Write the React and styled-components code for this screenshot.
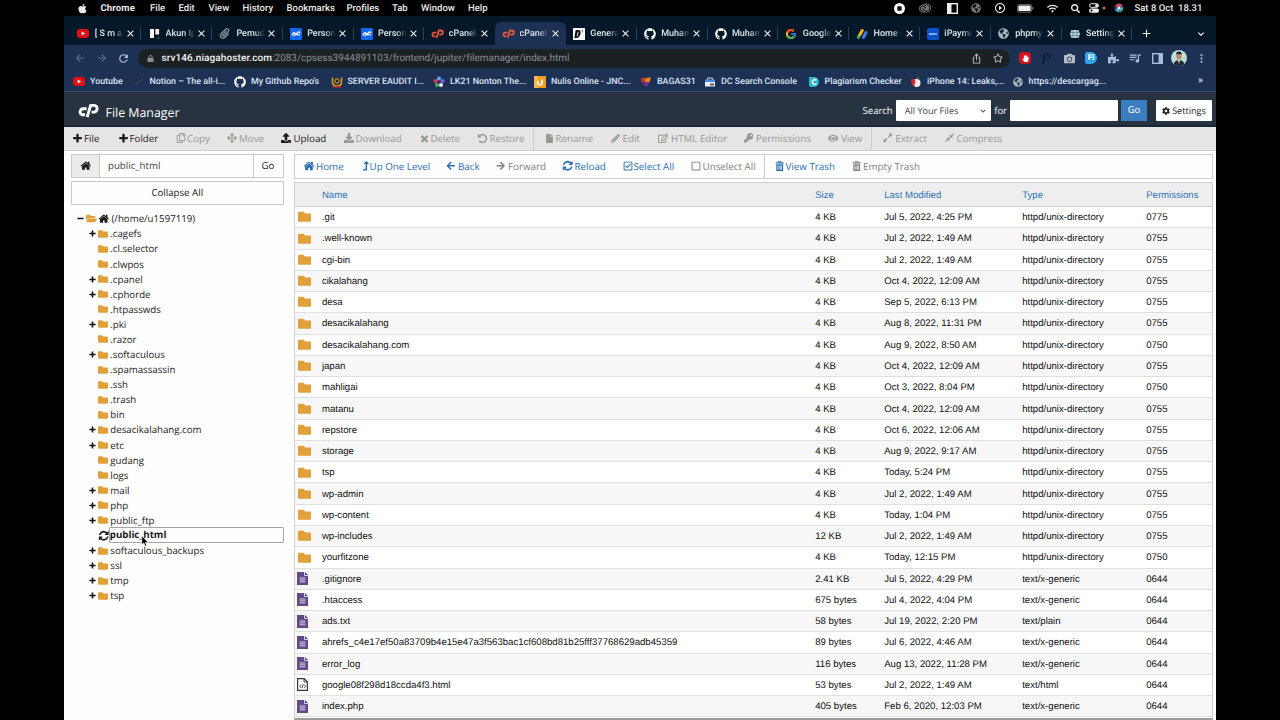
import React from 'react';
import styled, { createGlobalStyle } from 'styled-components';
import {
  FaApple, FaWifi, FaSearch, FaGithub, FaGlobeAmericas, FaPaperclip, FaLock, FaHandPaper,
  FaCamera, FaPuzzlePiece, FaFolder, FaFolderOpen, FaRegCopy, FaArrowsAlt, FaUpload, FaDownload,
  FaFile, FaPencilAlt, FaRegEdit, FaKey, FaEye, FaExpandAlt, FaCompressAlt, FaLevelUpAlt,
  FaArrowLeft, FaArrowRight, FaRegCheckSquare, FaRegSquare, FaCog, FaRegStar,
} from 'react-icons/fa';
import { ImBin } from 'react-icons/im';
import { FcGoogle } from 'react-icons/fc';
import { SiAdobecreativecloud } from 'react-icons/si';
import {
  MdArrowBack, MdArrowForward, MdRefresh, MdIosShare, MdQueueMusic, MdMoreVert, MdClose, MdAdd,
  MdKeyboardArrowDown, MdCheck, MdPlayCircleOutline,
} from 'react-icons/md';

const GlobalStyle = createGlobalStyle`
  * { box-sizing: border-box; }
  body {
    margin: 0;
    background: #000;
    overflow: hidden;
    text-rendering: geometricPrecision;
  }
  svg { display: block; flex: none; }
`;

const ui = `Roboto, "Liberation Sans", sans-serif`;
const open = `"Open Sans", "Noto Sans", sans-serif`;

const Screen = styled.div`
  width: 1152px;
  height: 720px;
  margin: 0 auto;
  display: flex;
  flex-direction: column;
  background: #fefefe;
  overflow: hidden;
`;

/* ---------- menu bar ---------- */

const MenuBar = styled.div`
  height: 16px;
  flex: none;
  display: flex;
  align-items: center;
  background: #000;
  color: #e8e8e8;
  font: 500 9.5px/15px ${ui};
  padding-left: 12.5px;
`;

const MenuItem = styled.div`
  width: ${({ w }) => w}px;
  flex: none;
  padding-top: 1px;
  white-space: nowrap;
  font-weight: ${({ strong }) => (strong ? 700 : 500)};
  letter-spacing: ${({ strong }) => (strong ? 0.15 : 0)}px;
`;

const StatusIcon = styled.div`
  width: ${({ w = 14 }) => w}px;
  margin-left: ${({ ml }) => ml}px;
  flex: none;
  display: flex;
  justify-content: center;
  color: ${({ dim }) => (dim ? '#777' : '#eee')};
`;

const Clock = styled.div`
  margin-left: 9px;
  padding-top: 1px;
  white-space: pre;
`;

/* ---------- browser ---------- */

const TabStrip = styled.div`
  height: 29px;
  flex: none;
  display: flex;
  align-items: flex-end;
  padding-left: 6.4px;
  background: #051829;
  color: #dfe4ea;
`;

const Tab = styled.div`
  width: 70.8px;
  height: 23px;
  flex: none;
  display: flex;
  align-items: center;
  padding-left: 6px;
  border-radius: 6px 6px 0 0;
  background: ${({ active }) => (active ? '#1c3154' : 'transparent')};
`;

const TabIcon = styled.div`
  width: 14px;
  display: flex;
  justify-content: center;
`;

const TabTitle = styled.div`
  width: 30px;
  margin-left: 4.4px;
  flex: none;
  white-space: pre;
  font: 500 9px/14px ${ui};
  mask-image: linear-gradient(to right, #000 60%, transparent 96%);
`;

const TabClose = styled.div`
  width: 11px;
  color: #fff;
`;

const TabDivider = styled.div`
  width: 1px;
  height: 13px;
  margin-left: auto;
  background: ${({ hidden }) => (hidden ? 'transparent' : '#2d3e50')};
`;

const StripButton = styled.div`
  width: 16px;
  height: 23px;
  margin-left: ${({ ml }) => ml}px;
  display: flex;
  align-items: center;
  justify-content: center;
  color: #fff;
`;

const AddressRow = styled.div`
  height: 26px;
  flex: none;
  display: flex;
  align-items: center;
  padding-left: 4.5px;
  background: #1c3154;
`;

const NavButton = styled.div`
  width: 22px;
  display: flex;
  justify-content: center;
  color: ${({ bright }) => (bright ? '#b9cbe9' : '#5c7090')};
`;

const Omnibox = styled.div`
  width: 872px;
  height: 19px;
  margin: 0 4px 0 3.5px;
  display: flex;
  align-items: center;
  padding: 0 1px 0 9px;
  border-radius: 10px;
  background: #1b2022;
  color: #8a8f93;
`;

const Url = styled.div`
  flex: 1;
  margin-left: 7.5px;
  font: 400 10px/19px ${ui};
  letter-spacing: -0.02px;
  white-space: nowrap;

  b {
    font-weight: 500;
    color: #f2f4f5;
    letter-spacing: 0.1px;
  }
`;

const OmniIcon = styled.div`
  width: 22px;
  display: flex;
  justify-content: center;
  color: #c3c7ca;
`;

const Extension = styled.div`
  width: 22px;
  display: flex;
  justify-content: center;
  color: #a9bddf;
`;

const HandBadge = styled.div`
  width: 12px;
  height: 12px;
  display: grid;
  place-items: center;
  border-radius: 4px;
  background: #d3121b;
  color: #fff;
`;

const FormulaMark = styled.div`
  font: italic 700 11px/12px "Liberation Serif", serif;
  color: #0a1422;
`;

const FiBadge = styled.div`
  width: 12px;
  height: 12px;
  border-radius: 2px 6px 6px 2px;
  background: #2ba3e6;
  color: #fff;
  font: 700 8px/12px ${ui};
  text-align: center;
`;

const BookmarkRow = styled.div`
  height: 21px;
  flex: none;
  display: flex;
  align-items: center;
  padding: 1px 0 0 8px;
  background: #1c3154;
  color: #dde6f5;
  border-bottom: 1px solid #34466a;
`;

const Bookmark = styled.div`
  width: ${({ w }) => w}px;
  flex: none;
  display: flex;
  align-items: center;
  gap: 4px;
  font: 500 8.9px/14px ${ui};
  white-space: nowrap;
`;

const BookmarkIcon = styled.div`
  width: 14px;
  flex: none;
  display: flex;
  justify-content: center;
`;

const MoreBookmarks = styled.div`
  font: 500 10px/14px ${ui};
  padding-bottom: 2px;
`;

/* ---------- cPanel header ---------- */

const Header = styled.div`
  height: 35px;
  flex: none;
  display: flex;
  align-items: center;
  padding: 5px 4px 1px 14px;
  background: #273340;
  border-bottom: 2px solid #1c2733;
  color: #fff;
  font: 400 9.5px/20px ${open};
`;

const HeaderTitle = styled.div`
  flex: 1;
  margin: 4px 0 0 6.5px;
  font-size: 12.4px;
`;

const SearchSelect = styled.div`
  width: 95.5px;
  height: 21px;
  margin: 0 3px;
  padding: 0 3px 0 9px;
  display: flex;
  align-items: center;
  justify-content: space-between;
  border-radius: 1px;
  background: #fff;
  color: #444;
  font-size: 9.1px;
`;

const SearchInput = styled.div`
  width: 107.5px;
  height: 21px;
  margin: 0 3.5px 0 3px;
  border-radius: 1px;
  background: #fff;
`;

const GoButton = styled.div`
  width: 26px;
  height: 21px;
  background: #3a7ebf;
  text-align: center;
`;

const SettingsButton = styled.div`
  width: 56px;
  height: 21px;
  margin-left: 9px;
  display: flex;
  align-items: center;
  justify-content: center;
  gap: 2px;
  border-radius: 1px;
  background: #fff;
  color: #222;
  font-size: 9.1px;
`;

const Toolbar = styled.div`
  height: 24px;
  flex: none;
  display: flex;
  align-items: center;
  padding-left: 8px;
  background: #e5e5e5;
  border-bottom: 1px solid #cfcfcf;
  font: 400 9.75px/21px ${open};
`;

const toolColors = { dark: '#1c1c1c', off: '#979797', link: '#2a6fb0', muted: '#808080' };

const Tool = styled.div`
  width: ${({ w }) => w}px;
  height: 100%;
  flex: none;
  display: flex;
  align-items: center;
  padding-bottom: 1px;
  color: ${({ tone }) => toolColors[tone]};
  white-space: nowrap;
`;

const ToolIcon = styled.div`
  width: ${({ w = 12 }) => w}px;
  flex: none;
`;

const ToolDivider = styled.div`
  width: 1px;
  height: 100%;
  margin-right: ${({ mr }) => mr}px;
  background: #cdcdcd;
`;

/* ---------- body ---------- */

const Body = styled.div`
  flex: 1;
  min-height: 0;
  display: flex;
  gap: 10px;
  padding: 3px 3.5px 0 7px;
`;

const Sidebar = styled.div`
  width: 212.5px;
  flex: none;
  font: 400 9.7px/15px ${open};
  color: #1a1a1a;
`;

const PathGroup = styled.div`
  height: 24px;
  display: flex;
  border: 1px solid #c9c9c9;
  line-height: 22px;
`;

const PathHome = styled.div`
  width: 28px;
  display: grid;
  place-items: center;
  background: #ebebeb;
  border-right: 1px solid #c9c9c9;
`;

const PathInput = styled.div`
  flex: 1;
  padding-left: 8px;
  color: #444;
`;

const PathGo = styled.div`
  width: 30px;
  text-align: center;
  border-left: 1px solid #c9c9c9;
`;

const CollapseButton = styled.div`
  height: 24px;
  margin: 3px 0 6.3px;
  border: 1px solid #c9c9c9;
  text-align: center;
  line-height: 21px;
`;

const TreeRow = styled.div`
  height: 15.09px;
  display: flex;
  align-items: center;
  padding-left: ${({ root }) => (root ? 6 : 18)}px;
`;

const Toggle = styled.div`
  width: 9px;
  flex: none;
`;

const TreeIcon = styled.div`
  width: ${({ w = 12.3 }) => w}px;
  flex: none;
`;

const TreeLabel = styled.div`
  white-space: nowrap;
`;

const SelectedLabel = styled.div`
  position: relative;
  flex: 1;
  height: 16px;
  margin-left: -1.5px;
  border: 1px solid #a5a5a5;
  border-radius: 1px;
  font-weight: 700;
  line-height: 14px;
`;

const Pointer = styled.svg`
  position: absolute;
  left: 31px;
  top: 7px;
`;

const Main = styled.div`
  flex: 1;
  min-width: 0;
  display: flex;
  flex-direction: column;
`;

const ActionBar = styled.div`
  height: 25px;
  flex: none;
  display: flex;
  align-items: center;
  margin-bottom: 3px;
  padding-left: 8.5px;
  border: 1px solid #cfcfcf;
  font: 400 9.8px/23px ${open};
`;

const Table = styled.div`
  flex: 1;
  min-height: 0;
  border: 1px solid #cfcfcf;
  border-bottom: 2px solid #9b9b9b;
  font: 400 9.6px/18px "Liberation Sans", Arial, sans-serif;
  color: #111;
  overflow: hidden;
`;

const TableRow = styled.div`
  height: ${({ head }) => (head ? 24 : 21.27)}px;
  display: grid;
  grid-template-columns: 27.4px 493.3px 69px 138px 124px 1fr;
  align-items: center;
  background: ${({ head, odd }) => (head ? '#eeeeee' : odd ? '#f7f7f7' : '#fff')};
  border-bottom: 1px solid ${({ head }) => (head ? '#cfcfcf' : '#dfdfdf')};
  color: ${({ head }) => (head ? '#2f74b5' : 'inherit')};
  white-space: nowrap;
`;

const Cell = styled.div`
  padding-top: 2px;
`;

const RowIcon = styled.div`
  padding-left: ${({ folder }) => (folder ? 3 : 2.5)}px;
`;

/* ---------- drawings ---------- */

const solid = {
  plus: 'M1600 736v192q0 40-28 68t-68 28h-416v416q0 40-28 68t-68 28h-192q-40 0-68-28t-28-68v-416h-416q-40 0-68-28t-28-68v-192q0-40 28-68t68-28h416v-416q0-40 28-68t68-28h192q40 0 68 28t28 68v416h416q40 0 68 28t28 68z',
  times: 'M1490 1322q0 40-28 68l-136 136q-28 28-68 28t-68-28l-294-294-294 294q-28 28-68 28t-68-28l-136-136q-28-28-28-68t28-68l294-294-294-294q-28-28-28-68t28-68l136-136q28-28 68-28t68 28l294 294 294-294q28-28 68-28t68 28l136 136q28 28 28 68t-28 68l-294 294 294 294q28 28 28 68z',
  home: 'M1472 992v480q0 26-19 45t-45 19h-384v-384h-256v384h-384q-26 0-45-19t-19-45v-480q0-1 .5-3t.5-3l575-474 575 474q1 2 1 6zm223-69l-62 74q-8 9-21 11h-3q-13 0-21-7l-692-577-692 577q-12 8-24 7-13-2-21-11l-62-74q-8-10-7-23.5t11-21.5l719-599q32-26 76-26t76 26l244 204v-195q0-14 9-23t23-9h192q14 0 23 9t9 23v408l219 182q10 8 11 21.5t-7 23.5z',
  refresh: 'M1639 1056q0 5-1 7-64 268-268 434.5t-478 166.5q-146 0-282.5-55t-243.5-157l-129 129q-19 19-45 19t-45-19-19-45v-448q0-26 19-45t45-19h448q26 0 45 19t19 45-19 45l-137 137q71 66 161 102t187 36q134 0 250-65t186-179q11-17 53-117 8-23 30-23h192q13 0 22.5 9.5t9.5 22.5zm25-800v448q0 26-19 45t-45 19h-448q-26 0-45-19t-19-45 19-45l138-138q-148-137-349-137-134 0-250 65t-186 179q-11 17-53 117-8 23-30 23h-199q-13 0-22.5-9.5t-9.5-22.5v-7q65-268 270-434.5t480-166.5q146 0 284 55.5t245 156.5l130-129q19-19 45-19t45 19 19 45z',
  undo: 'M1664 896q0 156-61 298t-164 245-245 164-298 61q-172 0-327-72.5t-264-204.5q-7-10-6.5-22.5t8.5-20.5l137-138q10-9 25-9 16 2 23 12 73 95 179 147t225 52q104 0 198.5-40.5t163.5-109.5 109.5-163.5 40.5-198.5-40.5-198.5-109.5-163.5-163.5-109.5-198.5-40.5q-98 0-188 35.5t-160 101.5l137 138q31 30 14 69-17 40-59 40h-448q-26 0-45-19t-19-45v-448q0-42 40-59 39-17 69 14l130 129q107-101 244.5-156.5t284.5-55.5q156 0 298 61t245 164 164 245 61 298z',
};

const Solid = ({ name, size }) => (
  <svg width={size} height={size} viewBox="0 0 1792 1792" fill="currentColor"><path d={solid[name]} /></svg>
);

const CpLogo = ({ width = 21, color = '#fff' }) => (
  <svg width={width} height={width * 0.7} viewBox="0 0 21 14.7" fill="none" stroke={color} strokeWidth="2.9" strokeLinejoin="round">
    <path d="M8.6 5.7H5.1a3.1 3.1 0 0 0-.6 6.100h2.600" />
    <path d="M9.200 14.200 12.600 2.400h3.200a3.300 3.300 0 0 1 0 6.700h-2.200" />
  </svg>
);

const YoutubeIcon = () => (
  <svg width="12" height="9" viewBox="0 0 12 9"><rect width="12" height="9" rx="2.4" fill="#e00d14" /><path d="M4.7 2.5v4L8.1 4.5z" fill="#fff" /></svg>
);

const BoardIcon = () => (
  <svg width="11" height="11" viewBox="0 0 11 11"><rect x="1" y="1" width="4" height="9" fill="#fff" /><rect x="6.3" y="1" width="3.8" height="5.5" fill="#f4ecd4" /><circle cx="9.4" cy="10" r="0.8" fill="#3aa655" /></svg>
);

const WaveIcon = () => (
  <svg width="12" height="12" viewBox="0 0 12 12"><rect width="12" height="12" rx="1" fill="#1566e8" /><path d="M2 7.6C3 4.6 4.4 4 5 5.6s1.2 1.6 2-.4 2.6-1.6 3 .2M3.6 7.8c1.2-.2 1.8-2 2.8-2.2s1 2 3.2 1" fill="none" stroke="#fff" strokeWidth="1.3" /></svg>
);

const NotesIcon = () => (
  <svg width="12" height="12" viewBox="0 0 12 12"><rect width="12" height="12" fill="#fff" /><path d="M2.6 2h3.600q2 1 1.200 4.200-.8 3-3.400 3.800H1.400z" fill="#111" /><path d="M4.800 3.800h.9L4.600 8.200h-.9z" fill="#fff" /><path d="M8.8 2h1.2v2.500H8.800z" fill="#888" /></svg>
);

const AdsIcon = () => (
  <svg width="12" height="12" viewBox="0 0 12 12" strokeLinecap="round" strokeWidth="3"><path d="M6.3 2.5 2.5 9" stroke="#f3b90c" /><path d="M10 4.5 7.5 9.3" stroke="#3f7fe8" /><circle cx="2.5" cy="9" r="1.7" fill="#35a455" /></svg>
);

const PaymentIcon = () => (
  <svg width="12" height="12" viewBox="0 0 12 12"><rect width="12" height="12" rx="2" fill="#0a50c8" /><path d="M2 6h8" stroke="#d6e5ff" strokeWidth="1.5" strokeDasharray="1.4 .4" /></svg>
);

const GridGlobeIcon = () => (
  <svg width="12" height="12" viewBox="0 0 12 12"><path d="M2.500 2h7l1.500 4-1.500 4h-7L1 6z" fill="#b5d5df" /><path d="M1 4.5h10M1 7.5h10M4 2v8M8 2v8" stroke="#37596b" strokeWidth=".5" /></svg>
);

const EmblemIcon = () => (
  <svg width="12" height="12" viewBox="0 0 12 12" fill="none"><path d="M1.5 1.5v5q0 3 4.5 3.5 4.5-.5 4.5-3.5v-5" stroke="#d9a01d" strokeWidth="1.5" /><circle cx="6" cy="5" r="2.2" fill="#2b241b" stroke="#f0b423" /><path d="M2 10.7h8" stroke="#d22c26" strokeWidth="1.6" /></svg>
);

const PetalsIcon = () => (
  <svg width="12" height="12" viewBox="0 0 12 12"><circle cx="6" cy="2.6" r="2" fill="#47b3ea" /><circle cx="9.5" cy="5" r="2" fill="#8c5de0" /><circle cx="8" cy="9" r="2" fill="#eee" /><circle cx="4" cy="9" r="2" fill="#46ae4f" /><circle cx="2.6" cy="5" r="2" fill="#e03c5c" /></svg>
);

const OrangeIcon = () => (
  <svg width="12" height="12" viewBox="0 0 12 12"><rect width="12" height="12" fill="#ef9d22" /><rect width="4" height="12" fill="#f5b74d" /><path d="M4 5v2q0 2 2 2t2-2V3.5" stroke="#fff" strokeWidth="1.6" fill="none" /></svg>
);

const FlagsIcon = () => (
  <svg width="12" height="12" viewBox="0 0 12 12"><path d="M1 2.5 5 1.5v4L1 6z" fill="#c63b2b" /><path d="M5.5 2 11 1.5 9.5 6 5 6.5z" fill="#ef8a1d" /><path d="M1.5 6.5 9.5 6 7.5 10.5 4 9z" fill="#7b2a86" /></svg>
);

const ConsoleIcon = () => (
  <svg width="12" height="12" viewBox="0 0 12 12"><path d="M3.5 4V2h5v2" fill="none" stroke="#cdd3da" /><rect x="1" y="3.5" width="10" height="3" fill="#4c87e0" /><rect x="1" y="6" width="10" height="4.5" fill="#eceff2" /><path d="M6 7.5h4v2H6z" fill="#596575" /></svg>
);

const TealIcon = () => (
  <svg width="12" height="12" viewBox="0 0 12 12"><path d="M1 1h5a5 5 0 0 1 0 10H3a2 2 0 0 1-2-2z" fill="#29b7cb" /><path d="M8.5 4.3a2.4 2.4 0 1 0 0 3.4" fill="none" stroke="#fff" strokeWidth="1.3" /></svg>
);

const FruitIcon = () => (
  <svg width="12" height="12" viewBox="0 0 12 12"><circle cx="6.5" cy="7" r="4" fill="#f4f0ee" /><path d="M1 4q2-2 4-.5Q6 6 4.5 8L5 11Q1 9 1 4z" fill="#d8232a" /><path d="M6.5 3Q7 .8 9.5 1 9 3 6.5 3z" fill="#4c9c3e" /></svg>
);

const AvatarIcon = () => (
  <svg width="16" height="16" viewBox="0 0 16 16"><clipPath id="face"><circle cx="8" cy="8" r="8" /></clipPath><g clipPath="url(#face)"><rect width="16" height="16" fill="#b9e0d2" /><path d="M2.5 16q0-6 5.5-6t5.5 6z" fill="#222830" /><ellipse cx="8" cy="6" rx="2.6" ry="3.5" fill="#b98a6e" /><path d="M5.2 5.2Q5 1.6 8 1.6t2.8 3.6L10 4H6z" fill="#17191d" /><path d="M7 10h2l-1 4z" fill="#eee" /></g></svg>
);

const PanelIcon = ({ left }) => (
  <svg width="11" height="11" viewBox="0 0 11 11"><rect x=".7" y=".7" width="9.6" height="9.6" fill="none" stroke="currentColor" strokeWidth="1.4" /><rect x={left ? 1 : 6.5} y="1" width="3.5" height="9" fill="currentColor" /></svg>
);

const RecordIcon = () => (
  <svg width="11" height="11" viewBox="0 0 11 11"><circle cx="5.5" cy="5.5" r="5.5" fill="#fff" /><rect x="3.3" y="3.3" width="4.4" height="4.4" rx=".8" fill="#111" /></svg>
);

const BatteryIcon = () => (
  <svg width="17" height="9" viewBox="0 0 17 9"><rect x=".4" y=".4" width="14.2" height="7.7" rx="2" fill="none" stroke="#888" strokeWidth=".8" /><rect x="1.4" y="1.4" width="12.2" height="5.7" rx="1.2" fill="#eee" /><path d="M15.8 3v2.6" stroke="#888" /></svg>
);

const ControlIcon = () => (
  <svg width="10" height="10" viewBox="0 0 10 10"><rect x=".5" y=".7" width="9" height="3.6" rx="1.8" fill="none" stroke="#eee" /><circle cx="7.6" cy="2.5" r="1.5" fill="#eee" /><rect y="5.5" width="10" height="4.3" rx="2.1" fill="#eee" /><circle cx="2.5" cy="7.6" r="1.1" fill="#111" /></svg>
);

const DotIcon = () => <svg width="4" height="4" viewBox="0 0 4 4"><circle cx="2" cy="2" r="1.5" fill="#c8751b" /></svg>;

const SiriIcon = () => (
  <svg width="10" height="10" viewBox="0 0 10 10"><circle cx="5" cy="5" r="4.8" fill="#2c3150" /><path d="M1 3Q5-1 8.5 2.5L5 5z" fill="#d8456c" /><path d="M1 6q1 3.5 4.5 3L5 5z" fill="#38a4dc" /><path d="M9 4q.5 4-3 5L5 5z" fill="#39b190" /><circle cx="5" cy="5" r="1.6" fill="#eef" /></svg>
);

const TextFileIcon = () => (
  <svg width="11" height="13" viewBox="0 0 11 13"><path d="M0 0h7.2v3.8H11V13H0z" fill="#614a85" /><path d="M8 0l3 3H8z" fill="#614a85" /><path d="M2.6 6h5.8M2.6 7.9h5.8M2.6 9.8h5.8" stroke="#d9cfe8" strokeWidth="1" /></svg>
);

const CodeFileIcon = () => (
  <svg width="11" height="13" viewBox="0 0 11 13" fill="none" stroke="#33363f"><path d="M.6.6h6.6L10.4 4v8.4H.6z" strokeWidth="1.2" /><path d="M7 .6V4h3.3M4 6.5 2.7 8.2 4 9.9M7.3 6.5l1.3 1.7-1.3 1.7M6.2 6.2 5.1 10.2" strokeWidth=".9" /></svg>
);

/* ---------- data ---------- */

const menus = [['File', 28.5], ['Edit', 30], ['View', 34], ['History', 44], ['Bookmarks', 60], ['Profiles', 45.5], ['Tab', 29], ['Window', 47], ['Help', 60]];

const orange = <CpLogo width={13} color="#f0553a" />;
const tabs = [
  [<YoutubeIcon />, '[ S m a'],
  [<BoardIcon />, 'Akun Ip'],
  [<FaPaperclip size={11} color="#7f8b96" />, 'Pemud'],
  [<WaveIcon />, 'Person'],
  [<WaveIcon />, 'Person'],
  [orange, 'cPanel'],
  [orange, 'cPanel'],
  [<NotesIcon />, 'Genera'],
  [<FaGithub size={12} color="#fff" />, 'Muham'],
  [<FaGithub size={12} color="#fff" />, 'Muham'],
  [<FcGoogle size={12} />, 'Google'],
  [<AdsIcon />, 'Home -'],
  [<PaymentIcon />, 'iPaymu'],
  [<FaGlobeAmericas size={11} color="#a9b2ba" />, 'phpmy'],
  [<GridGlobeIcon />, 'Setting'],
];

const bookmarks = [
  [<YoutubeIcon />, 'Youtube', 59.5],
  [<MdCheck size={13} color="#3d4650" />, 'Notion – The all-i...', 101.5],
  [<FaGithub size={12} color="#fff" />, "My Github Repo's", 96.5],
  [<EmblemIcon />, 'SERVER EAUDIT I...', 102.5],
  [<PetalsIcon />, 'LK21 Nonton The...', 101],
  [<OrangeIcon />, 'Nulis Online - JNC...', 106],
  [<FlagsIcon />, 'BAGAS31', 64],
  [<ConsoleIcon />, 'DC Search Console', 103.5],
  [<TealIcon />, 'Plagiarism Checker', 102.5],
  [<FruitIcon />, 'iPhone 14: Leaks,...', 101.5],
  [<FaGlobeAmericas size={10} color="#a9b2ba" />, 'https://descargag...', 187.5],
];

const folders = [
  ['.cagefs', 1], ['.cl.selector', 0], ['.clwpos', 0], ['.cpanel', 1], ['.cphorde', 1], ['.htpasswds', 0],
  ['.pki', 1], ['.razor', 0], ['.softaculous', 1], ['.spamassassin', 0], ['.ssh', 0], ['.trash', 0], ['bin', 0],
  ['desacikalahang.com', 1], ['etc', 1], ['gudang', 0], ['logs', 0], ['mail', 1], ['php', 1], ['public_ftp', 1],
  ['public_html', 0], ['softaculous_backups', 1], ['ssl', 1], ['tmp', 1], ['tsp', 1],
];

const dir = 'httpd/unix-directory';
const files = [
  ['.git', '4 KB', 'Jul 5, 2022, 4:25 PM', dir, '0775'],
  ['.well-known', '4 KB', 'Jul 2, 2022, 1:49 AM', dir, '0755'],
  ['cgi-bin', '4 KB', 'Jul 2, 2022, 1:49 AM', dir, '0755'],
  ['cikalahang', '4 KB', 'Oct 4, 2022, 12:09 AM', dir, '0755'],
  ['desa', '4 KB', 'Sep 5, 2022, 6:13 PM', dir, '0755'],
  ['desacikalahang', '4 KB', 'Aug 8, 2022, 11:31 PM', dir, '0755'],
  ['desacikalahang.com', '4 KB', 'Aug 9, 2022, 8:50 AM', dir, '0750'],
  ['japan', '4 KB', 'Oct 4, 2022, 12:09 AM', dir, '0755'],
  ['mahligai', '4 KB', 'Oct 3, 2022, 8:04 PM', dir, '0750'],
  ['matanu', '4 KB', 'Oct 4, 2022, 12:09 AM', dir, '0755'],
  ['repstore', '4 KB', 'Oct 6, 2022, 12:06 AM', dir, '0755'],
  ['storage', '4 KB', 'Aug 9, 2022, 9:17 AM', dir, '0755'],
  ['tsp', '4 KB', 'Today, 5:24 PM', dir, '0755'],
  ['wp-admin', '4 KB', 'Jul 2, 2022, 1:49 AM', dir, '0755'],
  ['wp-content', '4 KB', 'Today, 1:04 PM', dir, '0755'],
  ['wp-includes', '12 KB', 'Jul 2, 2022, 1:49 AM', dir, '0755'],
  ['yourfitzone', '4 KB', 'Today, 12:15 PM', dir, '0750'],
  ['.gitignore', '2.41 KB', 'Jul 5, 2022, 4:29 PM', 'text/x-generic', '0644'],
  ['.htaccess', '675 bytes', 'Jul 4, 2022, 4:04 PM', 'text/x-generic', '0644'],
  ['ads.txt', '58 bytes', 'Jul 19, 2022, 2:20 PM', 'text/plain', '0644'],
  ['ahrefs_c4e17ef50a83709b4e15e47a3f563bac1cf608bd81b25fff37768629adb45359', '89 bytes', 'Jul 6, 2022, 4:46 AM', 'text/x-generic', '0644'],
  ['error_log', '116 bytes', 'Aug 13, 2022, 11:28 PM', 'text/x-generic', '0644'],
  ['google08f298d18ccda4f3.html', '53 bytes', 'Jul 2, 2022, 1:49 AM', 'text/html', '0644'],
  ['index.php', '405 bytes', 'Feb 6, 2020, 12:03 PM', 'text/x-generic', '0644'],
];

// [icon, label, distance to the next item, tone, icon column width]
const tools = [
  [<Solid name="plus" size={11} />, 'File', 45.5, 'dark'],
  [<Solid name="plus" size={11} />, 'Folder', 58, 'dark'],
  [<FaRegCopy size={10} />, 'Copy', 51.5, 'off', 11.5],
  [<FaArrowsAlt size={10} />, 'Move', 54, 'off', 12],
  [<FaUpload size={10} />, 'Upload', 62.5, 'dark', 12.5],
  [<FaDownload size={10} />, 'Download', 75, 'off', 12],
  [<Solid name="times" size={11} />, 'Delete', 58.5, 'off', 12],
  [<Solid name="undo" size={11} />, 'Restore', 55.5, 'off', 12.5],
  null,
  [<FaFile size={9} />, 'Rename', 65.5, 'off', 10.5],
  [<FaPencilAlt size={9} />, 'Edit', 47, 'off', 12],
  [<FaRegEdit size={10.5} />, 'HTML Editor', 86, 'off', 13.5],
  [<FaKey size={9.5} />, 'Permissions', 84.5, 'off', 12.5],
  [<FaEye size={10.5} />, 'View', 43, 'off', 13],
  null,
  [<FaExpandAlt size={9.5} />, 'Extract', 61.5, 'off', 12.5],
  [<FaCompressAlt size={9.5} />, 'Compress', 80, 'off', 12],
];

const actions = [
  [<Solid name="home" size={12} />, 'Home', 58, 'link', 13],
  [<FaLevelUpAlt size={9.5} />, 'Up One Level', 85, 'link', 8.5],
  [<FaArrowLeft size={9.5} />, 'Back', 50, 'link', 12],
  [<FaArrowRight size={9.5} />, 'Forward', 66, 'muted', 12],
  [<Solid name="refresh" size={11.5} />, 'Reload', 60.5, 'link', 12.5],
  [<FaRegCheckSquare size={10} />, 'Select All', 68.5, 'link', 11],
  [<FaRegSquare size={10} />, 'Unselect All', 72.5, 'muted', 11.5],
  null,
  [<ImBin size={10} />, 'View Trash', 77.5, 'link', 11],
  [<ImBin size={10} />, 'Empty Trash', 80, 'muted', 11],
];

const ToolList = ({ items, gaps }) => {
  let seen = 0;
  return items.map((item, i) => {
    if (!item) return <ToolDivider key={i} mr={gaps[seen++]} />;
    const [icon, label, w, tone, iconWidth] = item;
    return (
      <Tool key={i} w={w} tone={tone}>
        <ToolIcon w={iconWidth}>{icon}</ToolIcon>
        {label}
      </Tool>
    );
  });
};

const fileIcon = (type) => {
  if (type === dir) return <FaFolder size={13.5} color="#e0a03a" />;
  return type === 'text/html' ? <CodeFileIcon /> : <TextFileIcon />;
};

const MacMenu = () => (
  <MenuBar>
    <MenuItem w={24}><FaApple size={11} /></MenuItem>
    <MenuItem w={49.5} strong>Chrome</MenuItem>
    {menus.map(([label, w]) => <MenuItem key={label} w={w}>{label}</MenuItem>)}
    <StatusIcon ml={364}><RecordIcon /></StatusIcon>
    <StatusIcon ml={12} dim><SiAdobecreativecloud size={12} /></StatusIcon>
    <StatusIcon ml={13.5}><PanelIcon left /></StatusIcon>
    <StatusIcon ml={9.5} dim><FaGlobeAmericas size={10} /></StatusIcon>
    <StatusIcon ml={10}><MdPlayCircleOutline size={12} /></StatusIcon>
    <StatusIcon ml={9} w={18}><BatteryIcon /></StatusIcon>
    <StatusIcon ml={11}><FaWifi size={11} /></StatusIcon>
    <StatusIcon ml={9}><FaSearch size={9} /></StatusIcon>
    <StatusIcon ml={5}><ControlIcon /></StatusIcon>
    <StatusIcon ml={1} w={4}><DotIcon /></StatusIcon>
    <StatusIcon ml={5.5}><SiriIcon /></StatusIcon>
    <Clock>Sat 8 Oct  18.31</Clock>
  </MenuBar>
);

const Browser = () => (
  <>
    <TabStrip>
      {tabs.map(([icon, title], i) => (
        <Tab key={i} active={i === 6 ? 1 : undefined}>
          <TabIcon>{icon}</TabIcon>
          <TabTitle>{title}</TabTitle>
          <TabClose><MdClose size={11} /></TabClose>
          <TabDivider hidden={i === 5 || i === 6} />
        </Tab>
      ))}
      <StripButton ml={6.5}><MdAdd size={13} /></StripButton>
      <StripButton ml={38}><MdKeyboardArrowDown size={12} /></StripButton>
    </TabStrip>
    <AddressRow>
      <NavButton><MdArrowBack size={12} /></NavButton>
      <NavButton><MdArrowForward size={12} /></NavButton>
      <NavButton bright="1"><MdRefresh size={13} /></NavButton>
      <Omnibox>
        <FaLock size={7} />
        <Url><b>srv146.niagahoster.com</b>:2083/cpsess3944891103/frontend/jupiter/filemanager/index.html</Url>
        <OmniIcon><MdIosShare size={11} /></OmniIcon>
        <OmniIcon><FaRegStar size={10} /></OmniIcon>
      </Omnibox>
      <Extension><HandBadge><FaHandPaper size={7} /></HandBadge></Extension>
      <Extension><FormulaMark>f?</FormulaMark></Extension>
      <Extension><FaCamera size={11} color="#b8bcc0" /></Extension>
      <Extension><FiBadge>FI</FiBadge></Extension>
      <Extension><FaPuzzlePiece size={11} /></Extension>
      <Extension><MdQueueMusic size={14} /></Extension>
      <Extension><PanelIcon /></Extension>
      <Extension><AvatarIcon /></Extension>
      <Extension><MdMoreVert size={13} /></Extension>
    </AddressRow>
    <BookmarkRow>
      {bookmarks.map(([icon, label, w]) => (
        <Bookmark key={label} w={w}><BookmarkIcon>{icon}</BookmarkIcon>{label}</Bookmark>
      ))}
      <MoreBookmarks>»</MoreBookmarks>
    </BookmarkRow>
  </>
);

const SearchHeader = () => (
  <Header>
    <CpLogo width={21} />
    <HeaderTitle>File Manager</HeaderTitle>
    Search
    <SearchSelect>All Your Files<MdKeyboardArrowDown size={10} /></SearchSelect>
    for
    <SearchInput />
    <GoButton>Go</GoButton>
    <SettingsButton><FaCog size={8} />Settings</SettingsButton>
  </Header>
);

const Tree = () => (
  <Sidebar>
    <PathGroup>
      <PathHome><Solid name="home" size={11.5} /></PathHome>
      <PathInput>public_html</PathInput>
      <PathGo>Go</PathGo>
    </PathGroup>
    <CollapseButton>Collapse All</CollapseButton>
    <TreeRow root="1">
      <Toggle><svg width="7" height="7" viewBox="0 0 7 7"><path d="M.5 3.5h6" stroke="#111" strokeWidth="1.5" /></svg></Toggle>
      <TreeIcon><FaFolderOpen size={11} color="#e0a03a" /></TreeIcon>
      <TreeIcon w={13.2}><Solid name="home" size={11.5} /></TreeIcon>
      <TreeLabel>(/home/u1597119)</TreeLabel>
    </TreeRow>
    {folders.map(([name, expandable]) => (
      <TreeRow key={name}>
        <Toggle>
          {expandable ? <svg width="7" height="7" viewBox="0 0 7 7"><path d="M.4 3.5h6.2M3.5.4v6.2" stroke="#111" strokeWidth="1.6" /></svg> : null}
        </Toggle>
        <TreeIcon>
          {name === 'public_html' ? <Solid name="refresh" size={11.5} /> : <FaFolder size={10} color="#e0a03a" />}
        </TreeIcon>
        {name === 'public_html' ? (
          <SelectedLabel>
            {name}
            <Pointer width="8" height="12" viewBox="0 0 8 12"><path d="M.8.8v9l2-1.9 1.4 3.2 1.5-.7-1.4-3H7.2z" fill="#000" stroke="#fff" strokeWidth=".6" /></Pointer>
          </SelectedLabel>
        ) : <TreeLabel>{name}</TreeLabel>}
      </TreeRow>
    ))}
  </Sidebar>
);

const App = () => (
  <>
    <GlobalStyle />
    <Screen>
      <MacMenu />
      <Browser />
      <SearchHeader />
      <Toolbar><ToolList items={tools} gaps={[11.5, 11]} /></Toolbar>
      <Body>
        <Tree />
        <Main>
          <ActionBar><ToolList items={actions} gaps={[10]} /></ActionBar>
          <Table>
            <TableRow head="1">
              <div />
              {['Name', 'Size', 'Last Modified', 'Type', 'Permissions'].map((label) => (
                <Cell key={label}>{label}</Cell>
              ))}
            </TableRow>
            {files.map((file, i) => (
              <TableRow key={file[0]} odd={i % 2}>
                <RowIcon folder={file[3] === dir ? 1 : undefined}>{fileIcon(file[3])}</RowIcon>
                {file.map((cell, c) => <Cell key={c}>{cell}</Cell>)}
              </TableRow>
            ))}
          </Table>
        </Main>
      </Body>
    </Screen>
  </>
);

export default App;
